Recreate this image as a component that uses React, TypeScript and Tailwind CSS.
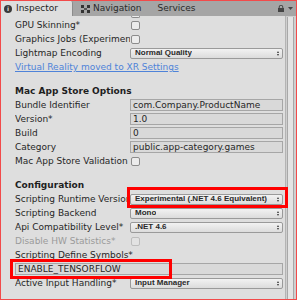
const font = { fontFamily: '"DejaVu Sans", "Liberation Sans", sans-serif' }
const popupFont = { fontFamily: '"Liberation Sans", Arial, sans-serif' }

function Label({ children, muted }: { children: React.ReactNode; muted?: boolean }) {
  return (
    <div
      className={`w-[115px] shrink-0 overflow-hidden whitespace-nowrap text-[9px] leading-[14px] ${muted ? 'text-[#9a9a9a]' : 'text-[#262626]'}`}
    >
      {children}
    </div>
  )
}

function Checkbox({ muted }: { muted?: boolean }) {
  return (
    <div
      className={`ml-[1px] h-[9px] w-[9px] rounded-[2px] border ${muted ? 'border-[#bdbdbd] bg-[#e2e2e2]' : 'border-[#8c8c8c] bg-[#ececec]'}`}
    />
  )
}

function Popup({ value }: { value: string }) {
  return (
    <div className="flex h-[11px] w-[153px] items-center justify-between rounded-[2px] border border-[#9a9a9a] bg-gradient-to-b from-[#f2f2f2] to-[#dcdcdc] pl-[4px] pr-[3px]">
      <span className="truncate text-[8px] font-bold leading-[10px] text-[#2a2a2a]" style={popupFont}>
        {value}
      </span>
      <span className="flex flex-col items-center">
        <span className="block h-0 w-0 border-x-[1.5px] border-b-[2px] border-x-transparent border-b-[#333]" />
        <span className="mt-[1px] block h-0 w-0 border-x-[1.5px] border-t-[2px] border-x-transparent border-t-[#333]" />
      </span>
    </div>
  )
}

function Field({ value, wide }: { value: string; wide?: boolean }) {
  return (
    <div
      className={`flex h-[12px] items-center border border-[#a6a6a6] bg-[#d9d9d9] pl-[2px] ${wide ? 'w-[268px]' : 'w-[153px]'}`}
    >
      <span className="text-[9px] leading-[10px] text-[#262626]">{value}</span>
    </div>
  )
}

function Row({ label, children, muted }: { label: string; children?: React.ReactNode; muted?: boolean }) {
  return (
    <div className="flex h-[14px] items-center">
      <Label muted={muted}>{label}</Label>
      {children}
    </div>
  )
}

function Heading({ children }: { children: React.ReactNode }) {
  return (
    <div className="mt-[10px] h-[14px] text-[9px] font-bold leading-[14px] text-[#1e1e1e]">{children}</div>
  )
}

export default function App() {
  return (
    <div
      className="relative flex h-[300px] w-[297px] flex-col overflow-hidden border border-[#f24a4a] bg-[#dedede]"
      style={font}
    >
      {/* tab bar */}
      <div className="flex h-[15px] shrink-0 items-end bg-[#a5a5a5]">
        <div className="flex h-[15px] w-[72px] items-center gap-[4px] rounded-tr-[2px] border-r border-[#8c8c8c] bg-[#dedede] pl-[3px]">
          <span className="flex h-[8px] w-[8px] items-center justify-center rounded-full bg-[#3a3a3a] text-[6px] font-bold leading-none text-[#dedede]">
            i
          </span>
          <span className="text-[9px] leading-none text-[#1e1e1e]">Inspector</span>
        </div>
        <div className="flex h-[15px] items-center gap-[3px] pl-[8px]">
          <svg width="9" height="8" viewBox="0 0 9 8">
            <rect x="0" y="0" width="3" height="3" fill="#333" />
            <rect x="6" y="0" width="3" height="3" fill="#333" />
            <rect x="0" y="5" width="3" height="3" fill="#333" />
            <rect x="6" y="5" width="3" height="3" fill="#333" />
            <rect x="3" y="3" width="3" height="2" fill="#555" />
          </svg>
          <span className="text-[9px] leading-none text-[#2a2a2a]">Navigation</span>
        </div>
        <div className="flex h-[15px] items-center pl-[16px]">
          <span className="text-[9px] leading-none text-[#2a2a2a]">Services</span>
        </div>
        <div className="ml-auto flex h-[15px] items-center gap-[4px] pr-[3px]">
          <svg width="6" height="7" viewBox="0 0 6 7">
            <path d="M1.2 3 V2 a1.8 1.8 0 0 1 3.6 0 V3" stroke="#444" strokeWidth="1" fill="none" />
            <rect x="0" y="3" width="6" height="4" fill="#444" />
          </svg>
          <svg width="5" height="6" viewBox="0 0 5 6">
            <path d="M0 1 H5 L2.5 4 Z" fill="#444" />
          </svg>
        </div>
      </div>

      {/* body */}
      <div className="flex min-h-0 flex-1">
        <div className="flex-1 pl-[14px]">
          <div className="flex h-[2px] items-end pl-[116px]">
            <div className="h-[2px] w-[9px] rounded-b-[2px] border-x border-b border-[#8c8c8c] bg-[#ececec]" />
          </div>
          <Row label="GPU Skinning*">
            <Checkbox />
          </Row>
          <Row label="Graphics Jobs (Experimental)*">
            <Checkbox />
          </Row>
          <Row label="Lightmap Encoding">
            <Popup value="Normal Quality" />
          </Row>
          <div className="h-[14px] text-[9px] leading-[14px] text-[#4f83d9] underline">
            Virtual Reality moved to XR Settings
          </div>

          <Heading>Mac App Store Options</Heading>
          <Row label="Bundle Identifier">
            <Field value="com.Company.ProductName" />
          </Row>
          <Row label="Version*">
            <Field value="1.0" />
          </Row>
          <Row label="Build">
            <Field value="0" />
          </Row>
          <Row label="Category">
            <Field value="public.app-category.games" />
          </Row>
          <Row label="Mac App Store Validation">
            <Checkbox />
          </Row>

          <Heading>Configuration</Heading>
          <Row label="Scripting Runtime Version*">
            <Popup value="Experimental (.NET 4.6 Equivalent)" />
          </Row>
          <Row label="Scripting Backend">
            <Popup value="Mono" />
          </Row>
          <Row label="Api Compatibility Level*">
            <Popup value=".NET 4.6" />
          </Row>
          <Row label="Disable HW Statistics*" muted>
            <Checkbox muted />
          </Row>
          <div className="h-[14px] text-[9px] leading-[14px] text-[#262626]">Scripting Define Symbols*</div>
          <div className="flex h-[14px] items-center">
            <Field value="ENABLE_TENSORFLOW" wide />
          </div>
          <Row label="Active Input Handling*">
            <Popup value="Input Manager" />
          </Row>
        </div>

        {/* scrollbar */}
        <div className="flex w-[11px] shrink-0 border-l border-[#b4b4b4] bg-[#cfcfcf] pl-[1px]">
          <div className="mt-[1px] w-[7px] border-x border-[#a8a8a8] bg-[#e4e4e4]" />
        </div>
      </div>

      {/* annotation boxes */}
      <div className="absolute left-[126px] top-[186px] h-[21px] w-[161px] border-[3px] border-[#f00]" />
      <div className="absolute left-[9px] top-[258px] h-[20px] w-[162px] border-[3px] border-[#f00]" />
    </div>
  )
}
